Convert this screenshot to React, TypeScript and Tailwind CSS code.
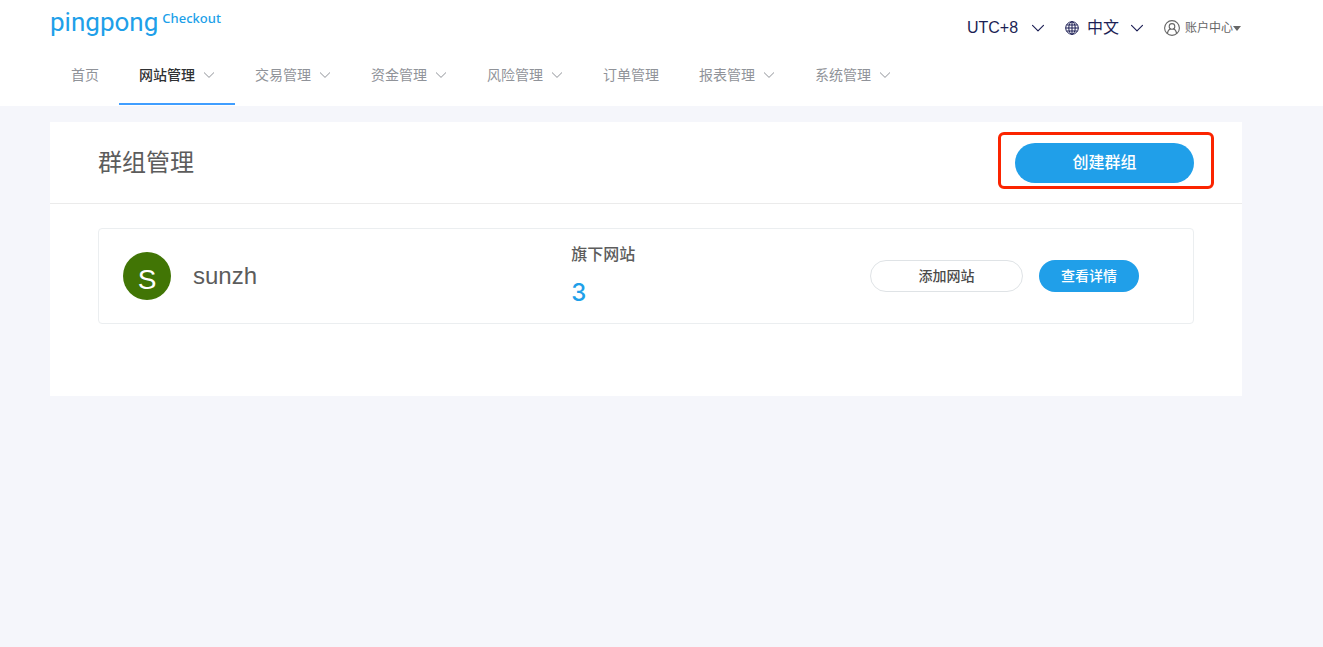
import clsx from 'clsx';

const NAV_ITEMS = [
  { label: '首页', hasMenu: false },
  { label: '网站管理', hasMenu: true, active: true },
  { label: '交易管理', hasMenu: true },
  { label: '资金管理', hasMenu: true },
  { label: '风险管理', hasMenu: true },
  { label: '订单管理', hasMenu: false },
  { label: '报表管理', hasMenu: true },
  { label: '系统管理', hasMenu: true },
];

const GROUPS = [{ name: 'sunzh', initial: 'S', sites: 3 }];

const Chevron = ({ className }: { className?: string }) => (
  <svg viewBox="0 0 12 12" fill="none" stroke="currentColor" className={className} aria-hidden="true">
    <path d="M1.3 3.8 6 8.4 10.7 3.8" strokeLinecap="round" strokeLinejoin="round" />
  </svg>
);

const GlobeIcon = () => (
  <svg viewBox="0 0 14 14" fill="none" stroke="currentColor" className="size-3.5" aria-hidden="true">
    <circle cx="7" cy="7" r="6.3" />
    <ellipse cx="7" cy="7" rx="3.2" ry="6.3" />
    <path d="M7 .7v12.6M.7 7h12.6M1.5 4h11M1.5 10h11" />
  </svg>
);

const UserIcon = () => (
  <svg viewBox="0 0 16 16" fill="none" stroke="currentColor" strokeWidth="1.1" className="size-4" aria-hidden="true">
    <circle cx="8" cy="8" r="7.4" />
    <circle cx="8" cy="6.4" r="2.8" />
    <path d="M3.4 13.4C3.8 10.9 5 9.4 6.5 8.8M12.6 13.4C12.2 10.9 11 9.4 9.5 8.8" strokeLinecap="round" />
  </svg>
);

const Logo = () => (
  <a href="#" className="flex items-start gap-1 text-[#209fe9]">
    <span className="font-['Roboto',sans-serif] text-[26px] leading-[44px]">pingpong</span>
    <span className="pt-2 font-['Noto_Sans',sans-serif] text-[13px] font-medium leading-5">Checkout</span>
  </a>
);

const Header = () => (
  <header className="bg-white pl-[50px] pr-[81px]">
    <div className="flex h-[46px] items-start justify-between">
      <Logo />
      <div className="flex items-center pr-px pt-4 text-base leading-6 text-[#1c1f55]">
        <label className="flex items-center gap-3">
          <select aria-label="时区" className="appearance-none bg-transparent">
            <option>UTC+8</option>
          </select>
          <Chevron className="size-3.5" />
        </label>
        <label className="ml-5 flex items-center">
          <GlobeIcon />
          <select aria-label="语言" className="ml-2 appearance-none bg-transparent">
            <option>中文</option>
          </select>
          <Chevron className="ml-2.5 size-3.5" />
        </label>
        <button type="button" className="ml-5 flex items-center text-xs text-[#666]">
          <UserIcon />
          <span className="ml-[5px]">账户中心</span>
          <svg viewBox="0 0 8 5" className="h-[5px] w-2" fill="currentColor" aria-hidden="true">
            <path d="M0 0h8L4 5z" />
          </svg>
        </button>
      </div>
    </div>
    <nav className="flex pb-px pl-px">
      {NAV_ITEMS.map((item) => (
        <a
          key={item.label}
          href="#"
          className={clsx(
            'flex h-[59px] items-center gap-2 border-b-2 px-5 text-sm',
            item.active ? 'border-[#409eff] font-medium text-[#303133]' : 'border-transparent text-[#909399]',
          )}
        >
          {item.label}
          {item.hasMenu && <Chevron className="size-3 text-[#909399]" />}
        </a>
      ))}
    </nav>
  </header>
);

const App = () => {
  return (
    <div className="min-h-screen bg-[#f5f6fb] font-['Liberation_Sans','Noto_Sans_CJK_SC',sans-serif]">
      <Header />
      <main className="pb-8 pl-[50px] pr-[81px] pt-4">
        <section className="bg-white pb-[72px]">
          <div className="flex items-center justify-between border-b border-[#ebebeb] px-12 pb-5 pt-[21px]">
            <h1 className="text-2xl leading-10 text-[#5c5c5c]">群组管理</h1>
            <div className="relative">
              <button
                type="button"
                className="block h-10 w-[179px] rounded-full bg-[#209fe9] text-base font-medium text-white"
              >
                创建群组
              </button>
              {/* callout frame around the main action */}
              <span className="pointer-events-none absolute -bottom-1.5 -left-[17px] -right-5 -top-[11px] rounded-md border-3 border-[#fb2400]" />
            </div>
          </div>
          <div className="px-12 pt-6">
            {GROUPS.map((group) => (
              <div
                key={group.name}
                className="grid h-24 grid-cols-[3fr_2fr_auto] items-center rounded border border-[#ebeef0] pl-6 pr-[54px]"
              >
                <div className="flex items-center gap-[22px]">
                  <span className="flex size-12 items-center justify-center rounded-full bg-[#417505] pt-2 text-[28px] leading-10 text-white">
                    {group.initial}
                  </span>
                  <span className="text-2xl text-[#5c5c5c]">{group.name}</span>
                </div>
                <div>
                  <p className="text-base font-medium leading-6 text-[#5c5c5c]">旗下网站</p>
                  <p className="pt-2.5 font-['Inter',sans-serif] text-2xl font-medium text-[#209fe9]">{group.sites}</p>
                </div>
                <div className="flex gap-4 text-sm font-medium">
                  <button
                    type="button"
                    className="h-8 w-[153px] rounded-full border border-[#dfe3e6] bg-white text-[#4a4a4a]"
                  >
                    添加网站
                  </button>
                  <button type="button" className="h-8 w-[100px] rounded-full bg-[#209fe9] text-white">
                    查看详情
                  </button>
                </div>
              </div>
            ))}
          </div>
        </section>
      </main>
    </div>
  );
};

export default App;
